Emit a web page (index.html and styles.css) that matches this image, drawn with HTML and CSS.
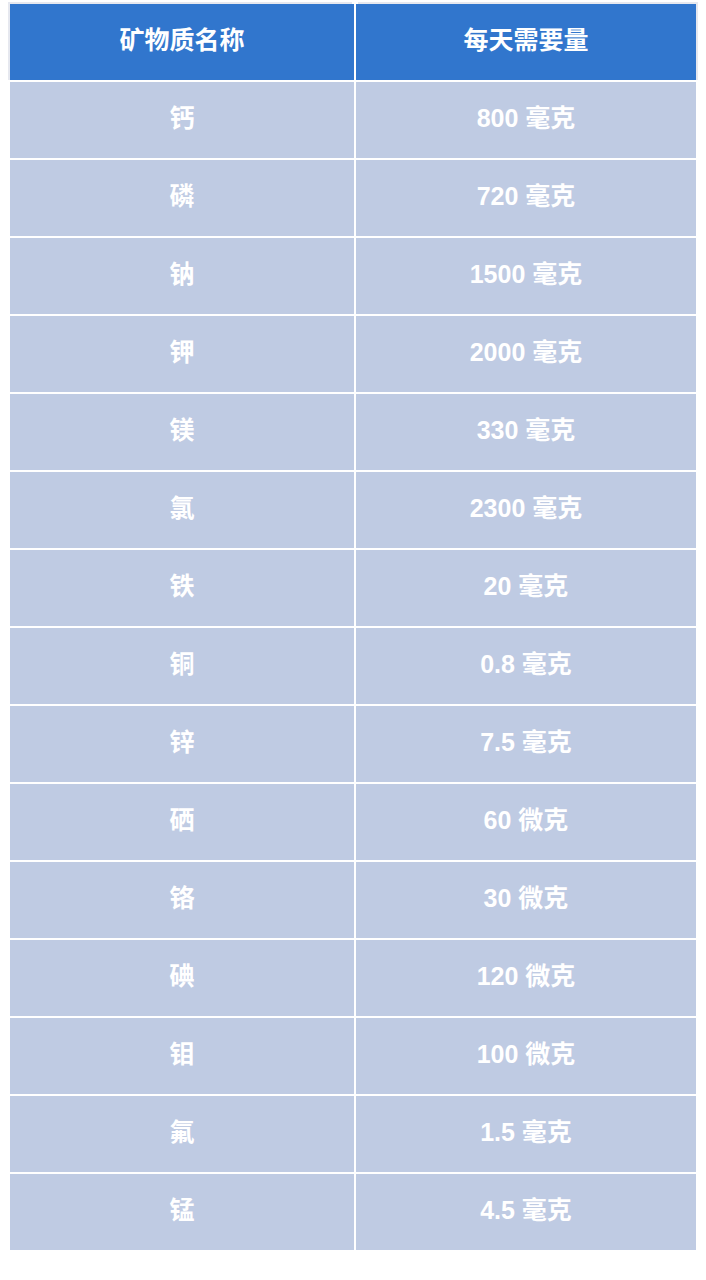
FILE: index.html
```html
<!DOCTYPE html>
<html lang="zh">
<head>
<meta charset="utf-8">
<title>矿物质每日需要量</title>
<link rel="stylesheet" href="styles.css">
</head>
<body>
<table class="minerals">
  <colgroup><col class="col-name"><col class="col-amount"></colgroup>
  <thead>
    <tr><th class="th-left">矿物质名称</th><th class="th-right">每天需要量</th></tr>
  </thead>
  <tbody>
    <tr><td>钙</td><td>800 毫克</td></tr>
    <tr><td>磷</td><td>720 毫克</td></tr>
    <tr><td>钠</td><td>1500 毫克</td></tr>
    <tr><td>钾</td><td>2000 毫克</td></tr>
    <tr><td>镁</td><td>330 毫克</td></tr>
    <tr><td>氯</td><td>2300 毫克</td></tr>
    <tr><td>铁</td><td>20 毫克</td></tr>
    <tr><td>铜</td><td>0.8 毫克</td></tr>
    <tr><td>锌</td><td>7.5 毫克</td></tr>
    <tr><td>硒</td><td>60 微克</td></tr>
    <tr><td>铬</td><td>30 微克</td></tr>
    <tr><td>碘</td><td>120 微克</td></tr>
    <tr><td>钼</td><td>100 微克</td></tr>
    <tr><td>氟</td><td>1.5 毫克</td></tr>
    <tr><td>锰</td><td>4.5 毫克</td></tr>
  </tbody>
</table>
</body>
</html>
```
FILE: styles.css
```css
html, body {
  background: #ffffff;
}
body {
  margin: 2px 8px 8px 8px;
  font-family: "Liberation Sans", "Noto Sans CJK SC", sans-serif;
}
.minerals {
  width: 690px;
  table-layout: fixed;
  border-collapse: separate;
  border-spacing: 2px;
}
.col-name { width: 344px; }
.minerals th,
.minerals td {
  height: 73px;
  padding: 0 0 3px 0;
  text-align: center;
  vertical-align: middle;
  color: #ffffff;
  font-weight: bold;
  font-size: 25px;
  line-height: 1;
}
.minerals th {
  background: #3176cd;
}
.minerals .th-left {
  box-shadow: -2px 0 0 #e6e8ef, -2px -4px 0 #e6e8ef;
}
.minerals .th-right {
  box-shadow: 2px 0 0 #e6e8ef, 2px -4px 0 #e6e8ef;
}
.minerals td {
  background: #bfcbe3;
}
```
